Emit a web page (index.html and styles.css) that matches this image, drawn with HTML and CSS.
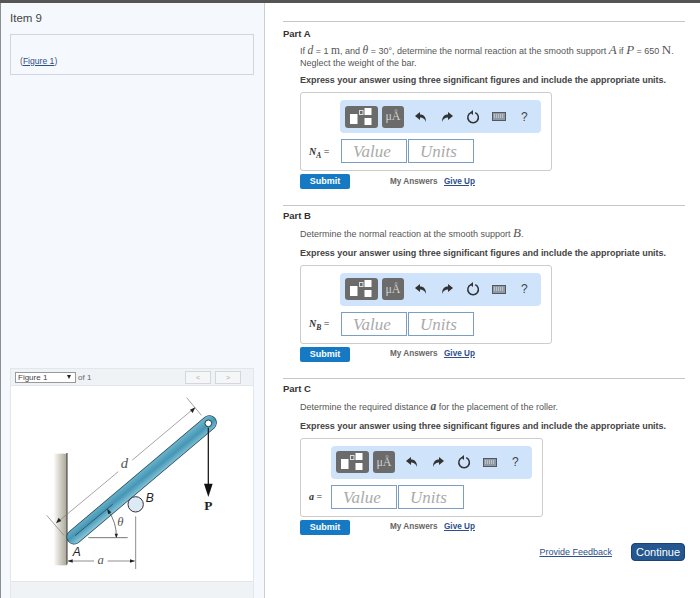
FILE: index.html
```html
<!DOCTYPE html>
<html>
<head>
    <link rel="stylesheet" href="styles.css">
</head>
<body>
    <div class="top-bar"></div>
    <div class="page">
        <div class="left-col">
            <h1 class="item-title">Item 9</h1>
            <div class="figure-link-box">(<a href="#">Figure 1</a>)</div>
            <div class="figure-panel">
                <div class="figure-toolbar">
                    <span class="figure-select">Figure 1<span class="select-arrow"></span></span>
                    <span class="figure-of">of 1</span>
                    <span class="pager">
                        <span class="pager-btn">&lt;</span>
                        <span class="pager-btn">&gt;</span>
                    </span>
                </div>
                <div class="figure-image">
                    <svg width="242" height="195" viewBox="33 65 726 585">
                        <defs>
                            <linearGradient id="barFill" gradientUnits="userSpaceOnUse" x1="411" y1="329" x2="439" y2="363">
                                <stop offset="0" stop-color="#6cb4cc"/>
                                <stop offset="0.5" stop-color="#4596b5"/>
                                <stop offset="1" stop-color="#86c4d8"/>
                            </linearGradient>
                            <linearGradient id="wallFill" x1="0" y1="0" x2="1" y2="0">
                                <stop offset="0" stop-color="#ffffff"/>
                                <stop offset="0.5" stop-color="#d2cfc5"/>
                                <stop offset="1" stop-color="#a9a698"/>
                            </linearGradient>
                        </defs>
                        <rect x="160" y="268" width="41" height="335" fill="url(#wallFill)"/>
                        <line x1="201" y1="266" x2="201" y2="600" stroke="#333" stroke-width="3"/>
                        <line x1="222" y1="518" x2="628" y2="175" stroke="#1f3f4d" stroke-width="45" stroke-linecap="round"/>
                        <line x1="222" y1="518" x2="628" y2="175" stroke="url(#barFill)" stroke-width="41" stroke-linecap="round"/>
                        <line x1="225" y1="514" x2="338" y2="420" stroke="#1f3f4d" stroke-width="2"/>
                        <circle cx="625" cy="177" r="10" fill="#fff" stroke="#1f3f4d" stroke-width="3"/>
                        <line x1="625" y1="190" x2="625" y2="365" stroke="#222" stroke-width="4"/>
                        <polygon points="612,358 638,358 625,398" fill="#111"/>
                        <text x="625" y="438" class="fig-p">P</text>
                        <circle cx="407" cy="420" r="23" fill="#dceaf6" stroke="#333" stroke-width="3"/>
                        <text x="437" y="413" class="fig-label">B</text>
                        <text x="218" y="575" class="fig-label">A</text>
                        <line x1="560" y1="100" x2="604" y2="153" stroke="#777" stroke-width="2"/>
                        <line x1="140" y1="453" x2="192" y2="513" stroke="#777" stroke-width="2"/>
                        <line x1="172" y1="474" x2="355" y2="322" stroke="#777" stroke-width="2"/>
                        <line x1="397" y1="287" x2="582" y2="132" stroke="#777" stroke-width="2"/>
                        <polygon points="168,477 184,470 176,460" fill="#222"/>
                        <polygon points="586,129 570,136 578,146" fill="#222"/>
                        <text x="373" y="312" class="fig-italic">d</text>
                        <line x1="265" y1="520" x2="383" y2="520" stroke="#333" stroke-width="2"/>
                        <path d="M325 440 Q350 475 349 518" fill="none" stroke="#333" stroke-width="2"/>
                        <polygon points="321,433 334,444 325,450" fill="#222"/>
                        <polygon points="344,508 354,508 349,521" fill="#222"/>
                        <text x="361" y="484" class="fig-italic fig-small">θ</text>
                        <line x1="407" y1="456" x2="407" y2="614" stroke="#555" stroke-width="2"/>
                        <line x1="204" y1="590" x2="282" y2="590" stroke="#555" stroke-width="2"/>
                        <line x1="323" y1="590" x2="404" y2="590" stroke="#555" stroke-width="2"/>
                        <polygon points="203,590 218,585 218,595" fill="#222"/>
                        <polygon points="405,590 390,585 390,595" fill="#222"/>
                        <text x="302" y="600" class="fig-italic fig-small">a</text>
                    </svg>
                </div>
                <div class="figure-footer"></div>
            </div>
        </div>

        <div class="right-col">
            <div class="part part-a">
                <h2 class="part-title">Part A</h2>
                <div class="part-body">
                    <p class="part-text">If <i class="math">d</i> = 1 <span class="math">m</span>, and <i class="math">θ</i> = 30°, determine the normal reaction at the smooth support <i class="math-big">A</i> if <i class="math-big">P</i> = 650 <span class="math-big">N</span>.<br>Neglect the weight of the bar.</p>
                    <p class="part-ask">Express your answer using three significant figures and include the appropriate units.</p>
                    <div class="answer-box">
                        <div class="tools">
                            <span class="tool-btn tool-wide"><svg width="26" height="20" viewBox="0 0 26 20"><rect x="1" y="7" width="7.5" height="10" fill="#fff"/><rect x="10.5" y="3.5" width="3.5" height="4" fill="none" stroke="#ddd"/><rect x="15.5" y="1" width="7" height="7" fill="#fff"/><rect x="15.5" y="11" width="7" height="7" fill="#fff"/></svg></span>
                            <span class="tool-btn tool-unit">μÅ</span>
                            <span class="tool-icons">
                                <svg width="14" height="12" viewBox="0 0 14 12"><path d="M1 5 L6 1 V3.5 C10 3.5 12 6 12 11 C11 8 9 6.5 6 6.5 V9 Z" fill="#333"/></svg>
                                <svg width="14" height="12" viewBox="0 0 14 12"><path d="M13 5 L8 1 V3.5 C4 3.5 2 6 2 11 C3 8 5 6.5 8 6.5 V9 Z" fill="#333"/></svg>
                                <svg width="14" height="14" viewBox="0 0 14 14"><path d="M5 2.6 A5.3 5.3 0 1 0 9.2 2.6" fill="none" stroke="#333" stroke-width="1.5"/><path d="M7 0 V5 L4 2.5 Z" fill="#333"/></svg>
                                <svg width="14" height="9" viewBox="0 0 14 9"><rect x="0.5" y="0.5" width="13" height="8" fill="#8f9ba3" stroke="#556"/><path d="M2 3 H12 M2 5 H12" stroke="#e6eaee" stroke-dasharray="1 1"/></svg>
                                <span class="tool-help">?</span>
                            </span>
                        </div>
                        <div class="answer-row">
                            <span class="answer-label"><i>N<sub>A</sub></i> =</span>
                            <span class="answer-input">Value</span>
                            <span class="answer-input">Units</span>
                        </div>
                    </div>
                    <div class="actions">
                        <span class="submit-btn">Submit</span>
                        <span class="my-answers">My Answers</span>
                        <a class="give-up" href="#">Give Up</a>
                    </div>
                </div>
            </div>

            <div class="part part-b">
                <h2 class="part-title">Part B</h2>
                <div class="part-body">
                    <p class="part-text">Determine the normal reaction at the smooth support <i class="math-big">B</i>.</p>
                    <p class="part-ask">Express your answer using three significant figures and include the appropriate units.</p>
                    <div class="answer-box">
                        <div class="tools">
                            <span class="tool-btn tool-wide"><svg width="26" height="20" viewBox="0 0 26 20"><rect x="1" y="7" width="7.5" height="10" fill="#fff"/><rect x="10.5" y="3.5" width="3.5" height="4" fill="none" stroke="#ddd"/><rect x="15.5" y="1" width="7" height="7" fill="#fff"/><rect x="15.5" y="11" width="7" height="7" fill="#fff"/></svg></span>
                            <span class="tool-btn tool-unit">μÅ</span>
                            <span class="tool-icons">
                                <svg width="14" height="12" viewBox="0 0 14 12"><path d="M1 5 L6 1 V3.5 C10 3.5 12 6 12 11 C11 8 9 6.5 6 6.5 V9 Z" fill="#333"/></svg>
                                <svg width="14" height="12" viewBox="0 0 14 12"><path d="M13 5 L8 1 V3.5 C4 3.5 2 6 2 11 C3 8 5 6.5 8 6.5 V9 Z" fill="#333"/></svg>
                                <svg width="14" height="14" viewBox="0 0 14 14"><path d="M5 2.6 A5.3 5.3 0 1 0 9.2 2.6" fill="none" stroke="#333" stroke-width="1.5"/><path d="M7 0 V5 L4 2.5 Z" fill="#333"/></svg>
                                <svg width="14" height="9" viewBox="0 0 14 9"><rect x="0.5" y="0.5" width="13" height="8" fill="#8f9ba3" stroke="#556"/><path d="M2 3 H12 M2 5 H12" stroke="#e6eaee" stroke-dasharray="1 1"/></svg>
                                <span class="tool-help">?</span>
                            </span>
                        </div>
                        <div class="answer-row">
                            <span class="answer-label"><i>N<sub>B</sub></i> =</span>
                            <span class="answer-input">Value</span>
                            <span class="answer-input">Units</span>
                        </div>
                    </div>
                    <div class="actions">
                        <span class="submit-btn">Submit</span>
                        <span class="my-answers">My Answers</span>
                        <a class="give-up" href="#">Give Up</a>
                    </div>
                </div>
            </div>

            <div class="part part-c">
                <h2 class="part-title">Part C</h2>
                <div class="part-body">
                    <p class="part-text">Determine the required distance <i class="math"><b>a</b></i> for the placement of the roller.</p>
                    <p class="part-ask">Express your answer using three significant figures and include the appropriate units.</p>
                    <div class="answer-box answer-box-short">
                        <div class="tools">
                            <span class="tool-btn tool-wide"><svg width="26" height="20" viewBox="0 0 26 20"><rect x="1" y="7" width="7.5" height="10" fill="#fff"/><rect x="10.5" y="3.5" width="3.5" height="4" fill="none" stroke="#ddd"/><rect x="15.5" y="1" width="7" height="7" fill="#fff"/><rect x="15.5" y="11" width="7" height="7" fill="#fff"/></svg></span>
                            <span class="tool-btn tool-unit">μÅ</span>
                            <span class="tool-icons">
                                <svg width="14" height="12" viewBox="0 0 14 12"><path d="M1 5 L6 1 V3.5 C10 3.5 12 6 12 11 C11 8 9 6.5 6 6.5 V9 Z" fill="#333"/></svg>
                                <svg width="14" height="12" viewBox="0 0 14 12"><path d="M13 5 L8 1 V3.5 C4 3.5 2 6 2 11 C3 8 5 6.5 8 6.5 V9 Z" fill="#333"/></svg>
                                <svg width="14" height="14" viewBox="0 0 14 14"><path d="M5 2.6 A5.3 5.3 0 1 0 9.2 2.6" fill="none" stroke="#333" stroke-width="1.5"/><path d="M7 0 V5 L4 2.5 Z" fill="#333"/></svg>
                                <svg width="14" height="9" viewBox="0 0 14 9"><rect x="0.5" y="0.5" width="13" height="8" fill="#8f9ba3" stroke="#556"/><path d="M2 3 H12 M2 5 H12" stroke="#e6eaee" stroke-dasharray="1 1"/></svg>
                                <span class="tool-help">?</span>
                            </span>
                        </div>
                        <div class="answer-row">
                            <span class="answer-label"><i>a</i> =</span>
                            <span class="answer-input">Value</span>
                            <span class="answer-input">Units</span>
                        </div>
                    </div>
                    <div class="actions">
                        <span class="submit-btn">Submit</span>
                        <span class="my-answers">My Answers</span>
                        <a class="give-up" href="#">Give Up</a>
                    </div>
                </div>
            </div>

            <div class="page-actions">
                <a class="feedback" href="#">Provide Feedback</a>
                <span class="continue-btn">Continue</span>
            </div>
        </div>
    </div>
</body>
</html>
```

FILE: styles.css
```css
html, body {
    margin: 0;
    padding: 0;
}
body {
    width: 700px;
    height: 598px;
    overflow: hidden;
    background: #fff;
    color: #444;
    font-family: "Liberation Sans", Arial, sans-serif;
    font-size: 9px;
}
.top-bar {
    height: 3px;
    background: #555;
}
.page {
    display: flex;
    height: 595px;
}
.left-col {
    width: 265px;
    flex: none;
    box-sizing: border-box;
    padding: 9px 10px 0 9px;
    background: #f5f9fe;
    border-left: 1px solid #8a8f96;
    border-right: 1px solid #c9ced6;
}
.item-title {
    margin: 0;
    font-size: 11.5px;
    font-weight: normal;
    line-height: 13px;
    color: #444;
}
.figure-link-box {
    height: 41px;
    margin-top: 9px;
    box-sizing: border-box;
    padding-top: 20px;
    padding-left: 9px;
    border: 1px solid #ced6df;
    font-size: 8.6px;
    line-height: 12px;
    color: #555;
}
.figure-link-box a, .feedback, .give-up {
    color: #2d4f8b;
}
.figure-panel {
    margin-top: 293px;
}
.figure-toolbar {
    display: flex;
    align-items: center;
    height: 18px;
    box-sizing: border-box;
    padding: 0 3px 0 4px;
    background: #f0f3f6;
    border: 1px solid #e2e7ec;
}
.figure-select {
    display: flex;
    justify-content: space-between;
    align-items: center;
    width: 61px;
    height: 11px;
    box-sizing: border-box;
    padding: 0 4px 0 2px;
    background: #fff;
    border: 1px solid #999;
    font-size: 8px;
    color: #444;
}
.select-arrow {
    width: 0;
    height: 0;
    border-left: 2.5px solid transparent;
    border-right: 2.5px solid transparent;
    border-top: 4px solid #222;
}
.figure-of {
    margin-left: 2px;
    font-size: 8px;
    color: #666;
}
.pager {
    display: flex;
    gap: 4px;
    margin-left: auto;
    margin-right: 9px;
}
.pager-btn {
    width: 26px;
    height: 13px;
    box-sizing: border-box;
    border: 1px solid #d3d6db;
    background: #f5f6f8;
    font-size: 7px;
    line-height: 11px;
    text-align: center;
    color: #a5a9ae;
}
.figure-image {
    height: 195px;
    background: #fff;
    border-left: 1px solid #e2e7ec;
    border-right: 1px solid #e2e7ec;
}
.figure-image svg {
    display: block;
}
.fig-p {
    font-family: "Liberation Serif", serif;
    font-weight: bold;
    font-size: 40px;
    text-anchor: middle;
    fill: #222;
}
.fig-label {
    font-size: 36px;
    font-style: italic;
    fill: #222;
}
.fig-italic {
    font-family: "Liberation Serif", serif;
    font-style: italic;
    font-size: 44px;
    text-anchor: middle;
    fill: #555;
}
.fig-small {
    font-size: 38px;
}
.figure-footer {
    height: 20px;
    background: #f0f3f6;
    border: 1px solid #e2e7ec;
}
.right-col {
    flex: 1;
    box-sizing: border-box;
    padding: 18px 15px 0 18px;
}
.part {
    border-top: 1px solid #c6c6c6;
}
.part-a {
    height: 183px;
}
.part-b {
    height: 172px;
}
.part-c {
    height: 164px;
}
.part-title {
    margin: 0;
    padding-top: 4px;
    font-size: 9.5px;
    line-height: 11px;
    font-weight: bold;
    color: #333;
}
.part-a .part-title {
    padding-top: 6px;
}
.part-body {
    padding-left: 17px;
}
.part-text {
    margin: 8px 0 0;
    line-height: 11.5px;
    color: #555;
}
.part-a .part-text {
    margin-top: 7px;
}
.part-ask {
    margin: 7px 0 0;
    font-weight: bold;
    line-height: 11px;
    letter-spacing: -0.03px;
    color: #444;
}
.part-a .part-ask {
    margin-top: 6px;
}
.math, .math-big {
    font-family: "Liberation Serif", serif;
    line-height: 0;
}
.math {
    font-size: 11.5px;
}
.math-big {
    font-size: 13px;
}
.answer-box {
    width: 252px;
    height: 79px;
    margin-top: 6px;
    box-sizing: border-box;
    padding: 7px 0 0 39px;
    border: 1px solid #ccc;
    border-radius: 3px;
}
.answer-box-short {
    width: 243px;
    padding-left: 30px;
}
.tools {
    display: flex;
    align-items: center;
    width: 201px;
    height: 33px;
    box-sizing: border-box;
    padding-left: 5px;
    background: #cfe4fb;
    border-radius: 4px;
}
.tool-btn {
    display: flex;
    align-items: center;
    justify-content: center;
    height: 22px;
    background: #6b6b6b;
    border-radius: 3px;
    color: #d0d0d0;
}
.tool-wide {
    width: 33px;
}
.tool-unit {
    width: 22px;
    margin-left: 4px;
    font-family: "Liberation Serif", serif;
    font-size: 12px;
}
.tool-icons {
    display: flex;
    align-items: center;
    gap: 12px;
    margin-left: 10px;
}
.tool-help {
    margin-left: 3px;
    font-size: 12px;
    color: #444;
}
.answer-row {
    display: flex;
    align-items: center;
    gap: 1px;
    margin-top: 6px;
    margin-left: -39px;
    padding-left: 8px;
}
.answer-box-short .answer-row {
    margin-left: -30px;
}
.answer-label {
    width: 31px;
    font-family: "Liberation Serif", serif;
    font-size: 10px;
    color: #333;
}
.answer-label i {
    font-weight: bold;
}
.answer-box-short .answer-label {
    width: 21px;
}
.answer-label sub {
    font-size: 7.5px;
    line-height: 0;
}
.answer-input {
    width: 66px;
    height: 24px;
    box-sizing: border-box;
    padding-left: 11px;
    background: #fff;
    border: 1px solid #7c9ec0;
    font-family: "Liberation Serif", serif;
    font-style: italic;
    font-size: 17px;
    line-height: 23px;
    color: #aaa;
}
.actions {
    display: flex;
    align-items: center;
    margin-top: 3px;
}
.submit-btn {
    width: 50px;
    height: 15px;
    box-sizing: border-box;
    background: #1579c3;
    border-radius: 2px;
    color: #fff;
    font-weight: bold;
    font-size: 9px;
    line-height: 15px;
    text-align: center;
}
.my-answers {
    margin-left: 40px;
    padding-bottom: 1px;
    font-weight: bold;
    font-size: 8.2px;
    color: #666;
}
.give-up {
    margin-left: 6.5px;
    padding-bottom: 1px;
    font-weight: bold;
    font-size: 8.2px;
}
.page-actions {
    display: flex;
    align-items: center;
    justify-content: flex-end;
    gap: 19px;
}
.feedback {
    font-size: 9px;
}
.continue-btn {
    width: 54px;
    height: 18px;
    background: #24568f;
    border: 1px solid #1c4271;
    box-sizing: border-box;
    border-radius: 4px;
    color: #fff;
    font-size: 11px;
    line-height: 16px;
    text-align: center;
}
```
